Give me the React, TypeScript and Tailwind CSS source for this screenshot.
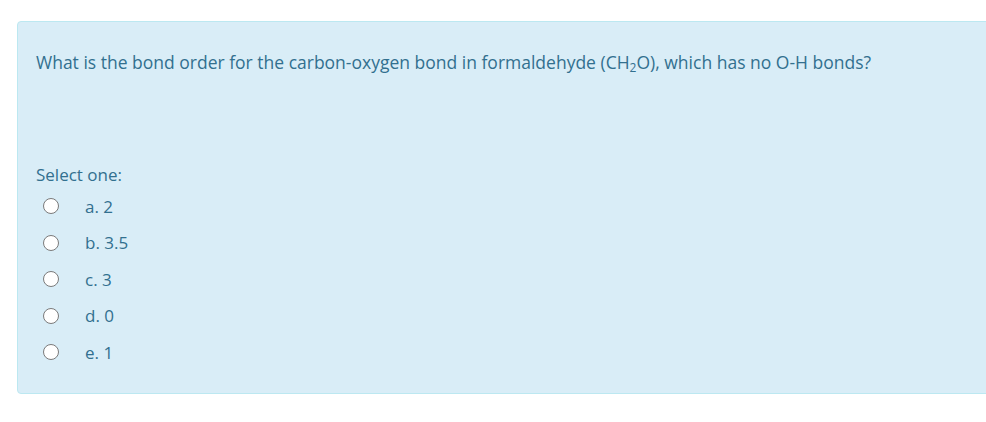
import React from 'react';

const options = ['a. 2', 'b. 3.5', 'c. 3', 'd. 0', 'e. 1'];

const Option: React.FC<{ label: string }> = ({ label }) => (
  <div className="flex items-center h-[36.5px]">
    <span className="ml-[7px] w-[16px] h-[16px] rounded-full border border-[#7a7a7a] bg-white shrink-0"></span>
    <span className="ml-[26px] text-[17px]">{label}</span>
  </div>
);

const App: React.FC = () => {
  return (
    <div className="w-[986px] h-[422px] bg-white overflow-hidden pt-[21px] pl-[17px]" style={{ fontFamily: '"Open Sans", sans-serif' }}>
      <div className="w-[990px] h-[373px] border border-[#bce8f1] bg-[#d9edf7] rounded-[4px] text-[#32708f] text-[17.5px] pl-[18px] pt-[29px]">
        <p className="leading-[22px]">
          What is the bond order for the carbon-oxygen bond in formaldehyde (CH<sub className="text-[12px]">2</sub>O), which has no O-H bonds?
        </p>
        <p className="leading-[22px] mt-[91px] text-[17px]">Select one:</p>
        <div className="mt-[2px]">
          {options.map((o) => (
            <Option key={o} label={o} />
          ))}
        </div>
      </div>
    </div>
  );
};

export default App;
